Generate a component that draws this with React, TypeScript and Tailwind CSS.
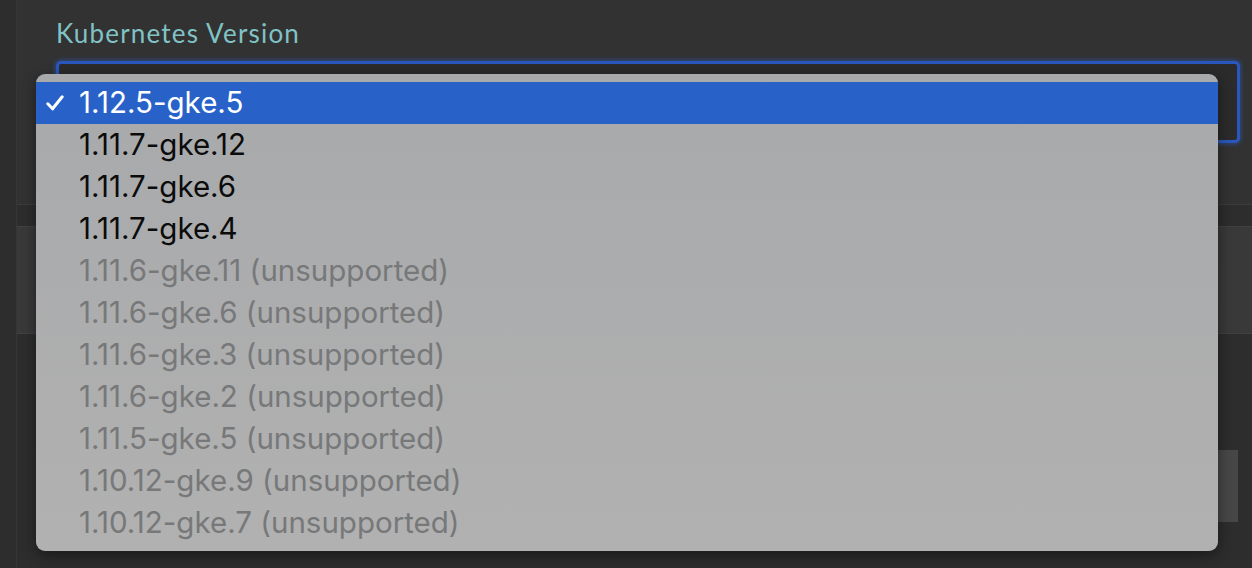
import React from "react";

const items: { label: string; state: "selected" | "normal" | "disabled" }[] = [
  { label: "1.12.5-gke.5", state: "selected" },
  { label: "1.11.7-gke.12", state: "normal" },
  { label: "1.11.7-gke.6", state: "normal" },
  { label: "1.11.7-gke.4", state: "normal" },
  { label: "1.11.6-gke.11 (unsupported)", state: "disabled" },
  { label: "1.11.6-gke.6 (unsupported)", state: "disabled" },
  { label: "1.11.6-gke.3 (unsupported)", state: "disabled" },
  { label: "1.11.6-gke.2 (unsupported)", state: "disabled" },
  { label: "1.11.5-gke.5 (unsupported)", state: "disabled" },
  { label: "1.10.12-gke.9 (unsupported)", state: "disabled" },
  { label: "1.10.12-gke.7 (unsupported)", state: "disabled" },
];

export default function App() {
  return (
    <div className="relative w-[1252px] h-[568px] overflow-hidden bg-[#2d2d2d] flex">
      <div className="w-[17px] shrink-0 border-r border-[#363636]" />
      <div className="flex-1 flex flex-col">
        <div className="h-[205px] bg-[#323232] border-b border-[#3b3b3b] pl-[39px] pr-[12px] pt-[17px]">
          <div
            className="text-[26px] leading-[32px] text-[#80c3c6] tracking-[1.2px]"
            style={{ fontFamily: "Lato, 'Noto Sans', sans-serif" }}
          >
            Kubernetes Version
          </div>
          <div className="mt-[12px] h-[82px] rounded-[5px] border-[3px] border-[#2a57bd] shadow-[0_0_4px_1px_rgba(45,95,204,0.55)] bg-[#2b2b2b]" />
        </div>
        <div className="h-[21px]" />
        <div className="h-[108px] bg-[#393939] border-y border-[#414141]" />
        <div className="flex-1 flex justify-end pt-[116px] pr-[14px]">
          <div className="w-[140px] h-[72px] bg-[#474747]" />
        </div>
      </div>

      <div
        className="absolute left-[36px] top-[74px] w-[1182px] h-[477px] rounded-[9px] bg-gradient-to-b from-[#a8a9ab] to-[#b1b1b1] shadow-[0_4px_14px_rgba(0,0,0,0.45)] pt-[8px]"
        style={{ fontFamily: "Inter, 'Liberation Sans', sans-serif" }}
      >
        {items.map((it) => (
          <div
            key={it.label}
            className={
              it.state === "selected"
                ? "h-[42px] flex items-center bg-[#2862c9] text-white"
                : it.state === "normal"
                ? "h-[42px] flex items-center text-[#0b0b0b]"
                : "h-[42px] flex items-center text-[#777879]"
            }
          >
            <div className="w-[43px] shrink-0 flex justify-end pr-[15px]">
              {it.state === "selected" && (
                <svg width="18" height="16" viewBox="0 0 18 16" fill="none">
                  <path d="M1.8 8.8 L6.6 13.8 L16.2 1.8" stroke="white" strokeWidth="3" strokeLinecap="round" strokeLinejoin="round" />
                </svg>
              )}
            </div>
            <span className="text-[29.5px] leading-none">{it.label}</span>
          </div>
        ))}
      </div>
    </div>
  );
}
